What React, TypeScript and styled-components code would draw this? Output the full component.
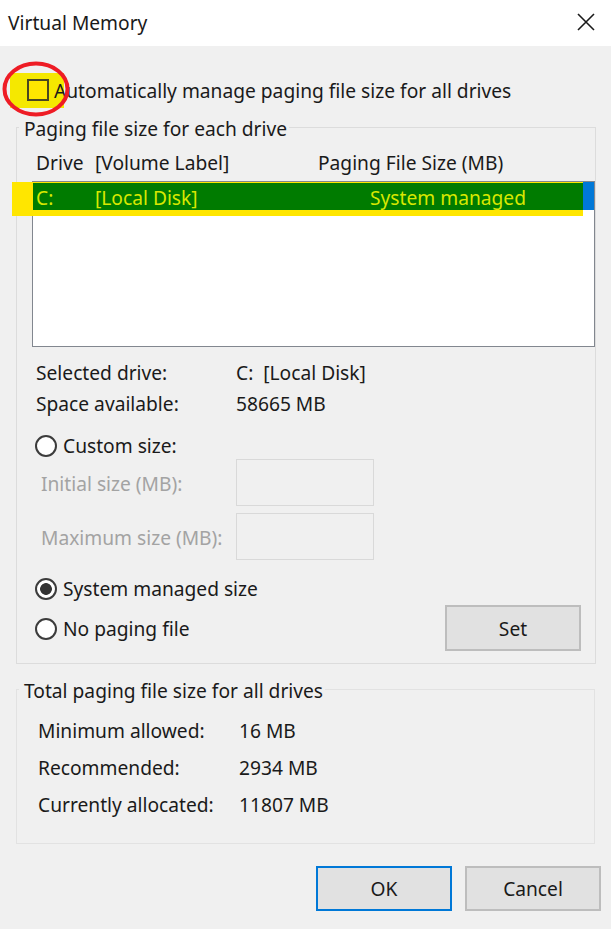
import styled, { createGlobalStyle } from 'styled-components'

const GlobalStyle = createGlobalStyle`
  html, body {
    margin: 0;
    padding: 0;
    background: #f0f0f0;
  }
  * {
    box-sizing: border-box;
  }
`

const summaryRows = [
  { label: 'Minimum allowed:', value: '16 MB' },
  { label: 'Recommended:', value: '2934 MB' },
  { label: 'Currently allocated:', value: '11807 MB' },
]

const App = () => {
  return (
    <Dialog>
      <GlobalStyle />
      <TitleBar>
        <div>Virtual Memory</div>
        <CloseIcon width="18" height="18" viewBox="0 0 18 18">
          <path d="M1 1 L17 17 M17 1 L1 17" stroke="#1a1a1a" strokeWidth="1.6" fill="none" />
        </CloseIcon>
      </TitleBar>
      <Body>
        <AutoRow>
          <AutoHighlight />
          <CheckBox />
          <AutoLabel>Automatically manage paging file size for all drives</AutoLabel>
          <RedCircle width="68" height="58" viewBox="0 0 68 58">
            <ellipse cx="34" cy="28" rx="31.5" ry="25.5" stroke="#ee1c25" strokeWidth="4" fill="none" />
          </RedCircle>
        </AutoRow>
        <DriveGroup>
          <GroupTitle>Paging file size for each drive</GroupTitle>
          <DriveContent>
            <ListHeader>
              <DriveCol>Drive</DriveCol>
              <LabelCol>[Volume Label]</LabelCol>
              <span>Paging File Size (MB)</span>
            </ListHeader>
            <DriveList>
              <SelectedRow>
                <RowHighlight>
                  <RowGreen />
                </RowHighlight>
                <RowCells>
                  <DriveCol>C:</DriveCol>
                  <LabelCol>[Local Disk]</LabelCol>
                  <ManagedCol>System managed</ManagedCol>
                </RowCells>
              </SelectedRow>
            </DriveList>
            <InfoGrid>
              <span>Selected drive:</span>
              <span>C:&nbsp;&nbsp;[Local Disk]</span>
              <span>Space available:</span>
              <span>58665 MB</span>
            </InfoGrid>
            <SizeSection>
              <RadioRow>
                <Radio />
                <span>Custom size:</span>
              </RadioRow>
              <SizeFields>
                <FieldRow>
                  <FieldLabel>Initial size (MB):</FieldLabel>
                  <FieldBox />
                </FieldRow>
                <FieldRow>
                  <FieldLabel>Maximum size (MB):</FieldLabel>
                  <FieldBox />
                </FieldRow>
              </SizeFields>
              <BottomRow>
                <RadioStack>
                  <RadioRow>
                    <Radio $checked />
                    <span>System managed size</span>
                  </RadioRow>
                  <RadioRow>
                    <Radio />
                    <span>No paging file</span>
                  </RadioRow>
                </RadioStack>
                <SetButton>Set</SetButton>
              </BottomRow>
            </SizeSection>
          </DriveContent>
        </DriveGroup>
        <TotalGroup>
          <GroupTitle>Total paging file size for all drives</GroupTitle>
          <TotalGrid>
            {summaryRows.map((row) => (
              <TotalRow key={row.label}>
                <span>{row.label}</span>
                <span>{row.value}</span>
              </TotalRow>
            ))}
          </TotalGrid>
        </TotalGroup>
        <Footer>
          <DialogButton $primary>OK</DialogButton>
          <DialogButton>Cancel</DialogButton>
        </Footer>
      </Body>
    </Dialog>
  )
}

export default App

const Dialog = styled.div`
  width: 611px;
  height: 929px;
  overflow: hidden;
  background: #f0f0f0;
  color: #1a1a1a;
  font-family: 'Noto Sans', 'Open Sans', sans-serif;
  font-size: 19.2px;
  line-height: 26px;
`

const TitleBar = styled.div`
  height: 46px;
  background: #fff;
  display: flex;
  align-items: center;
  justify-content: space-between;
  padding: 0 16px 0 8px;
`

const CloseIcon = styled.svg`
  display: block;
  margin-top: -2px;
`

const Body = styled.div`
  padding: 0 16px;
`

const AutoRow = styled.div`
  position: relative;
  height: 67px;
  padding: 32px 0 0 11px;
  display: flex;
  align-items: flex-start;
  gap: 5px;
`

const AutoHighlight = styled.div`
  position: absolute;
  left: -6px;
  top: 27px;
  width: 54px;
  height: 35px;
  background: #f5e800;
`

const CheckBox = styled.div`
  position: relative;
  flex: none;
  width: 22px;
  height: 22px;
  margin-top: 1px;
  background: #ffe600;
  border: 2px solid #4a4620;
`

const AutoLabel = styled.span`
  position: relative;
  white-space: nowrap;
`

const RedCircle = styled.svg`
  position: absolute;
  left: -14px;
  top: 15px;
`

const DriveGroup = styled.fieldset`
  margin: 0;
  padding: 0;
  width: 579px;
  height: 551px;
  border: 1px solid #dcdcdc;
`

const DriveContent = styled.div`
  padding-left: 15px;
`

const GroupTitle = styled.legend`
  margin-left: 2px;
  padding: 4px 2px 0 5px;
  line-height: 24px;
`

const ListHeader = styled.div`
  display: flex;
  height: 40px;
  padding: 9px 0 0 4px;
`

const DriveCol = styled.span`
  flex: none;
  width: 59px;
`

const LabelCol = styled.span`
  flex: none;
  width: 223px;
  white-space: nowrap;
`

const ManagedCol = styled.span`
  margin-left: 52px;
  white-space: nowrap;
`

const DriveList = styled.div`
  width: 563px;
  height: 166px;
  background: #fff;
  border: 1px solid #82878f;
`

const SelectedRow = styled.div`
  position: relative;
  height: 28px;
  background: #0078d7;
`

const RowHighlight = styled.div`
  position: absolute;
  left: -21px;
  right: 11px;
  top: 0;
  height: 34px;
  background: #ffe600;
`

const RowGreen = styled.div`
  position: absolute;
  left: 21px;
  right: 0;
  top: 1px;
  height: 27px;
  background: #007b00;
`

const RowCells = styled.div`
  position: relative;
  display: flex;
  height: 28px;
  padding-left: 3px;
  color: #d8e800;
  line-height: 32px;
`

const InfoGrid = styled.div`
  display: grid;
  grid-template-columns: 200px auto;
  grid-auto-rows: 31px;
  align-items: center;
  padding: 10px 0 0 4px;
`

const SizeSection = styled.div`
  padding: 14px 0 0 3px;
`

const RadioRow = styled.div`
  display: flex;
  align-items: center;
  gap: 6px;
  height: 26px;
`

const Radio = styled.span<{ $checked?: boolean }>`
  flex: none;
  width: 22px;
  height: 22px;
  border-radius: 50%;
  border: 2px solid #3c3c3c;
  background: ${(props) =>
    props.$checked ? 'radial-gradient(circle, #333 0 5.5px, #fff 6.2px)' : '#fff'};
`

const SizeFields = styled.div`
  display: flex;
  flex-direction: column;
  gap: 7px;
`

const FieldRow = styled.div`
  display: flex;
  align-items: center;
  height: 47px;
  padding-left: 6px;
`

const FieldLabel = styled.span`
  flex: none;
  width: 195px;
  margin-top: 2px;
  color: #a3a3a3;
  white-space: nowrap;
`

const FieldBox = styled.div`
  width: 138px;
  height: 47px;
  border: 1px solid #d9d9d9;
  background: #f0f0f0;
`

const BottomRow = styled.div`
  display: flex;
  justify-content: space-between;
  align-items: flex-start;
  width: 546px;
  margin-top: 16px;
`

const RadioStack = styled.div`
  display: flex;
  flex-direction: column;
  gap: 14px;
`

const SetButton = styled.div`
  width: 136px;
  height: 46px;
  margin-top: 29px;
  padding-top: 2px;
  background: #e1e1e1;
  border: 2px solid #bdbdbd;
  display: flex;
  align-items: center;
  justify-content: center;
`

const TotalGroup = styled.fieldset`
  margin: 11px 0 0;
  padding: 0;
  width: 579px;
  height: 169px;
  border: 1px solid #e2e2e2;
`

const TotalGrid = styled.div`
  display: flex;
  flex-direction: column;
  gap: 11px;
  padding: 15px 0 0 21px;
`

const TotalRow = styled.div`
  display: grid;
  grid-template-columns: 201px auto;
  height: 26px;
`

const Footer = styled.div`
  display: flex;
  justify-content: flex-end;
  gap: 13px;
  margin: 22px -6px 0 0;
`

const DialogButton = styled.div<{ $primary?: boolean }>`
  width: 136px;
  height: 45px;
  background: #e1e1e1;
  border: 2px solid ${(props) => (props.$primary ? '#0078d7' : '#bdbdbd')};
  display: flex;
  align-items: center;
  justify-content: center;
`
